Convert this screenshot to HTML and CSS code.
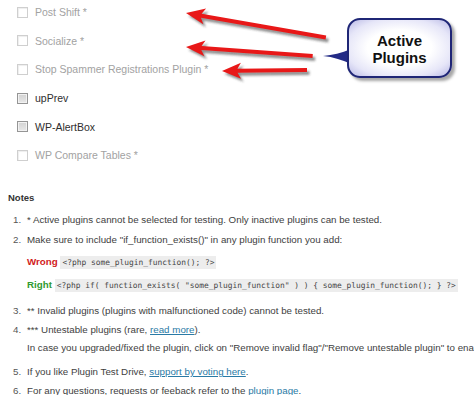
FILE: index.html
```html
<!DOCTYPE html>
<html>
<head>
<meta charset="utf-8">
<link rel="stylesheet" href="styles.css">
</head>
<body>
<div class="page">
  <div class="plugins">
    <div class="row off"><span class="cb"></span><span class="lbl">Post Shift *</span></div>
    <div class="row off"><span class="cb"></span><span class="lbl">Socialize *</span></div>
    <div class="row off"><span class="cb"></span><span class="lbl">Stop Spammer Registrations Plugin *</span></div>
    <div class="row on"><span class="cb"></span><span class="lbl">upPrev</span></div>
    <div class="row on"><span class="cb"></span><span class="lbl">WP-AlertBox</span></div>
    <div class="row off"><span class="cb"></span><span class="lbl">WP Compare Tables *</span></div>
  </div>

  <h3 class="notes-title">Notes</h3>
  <ol class="notes">
    <li><div class="txt">* Active plugins cannot be selected for testing. Only inactive plugins can be tested.</div></li>
    <li class="multi"><div class="txt">
      <p>Make sure to include "if_function_exists()" in any plugin function you add:</p>
      <p class="code-line"><b class="wrong">Wrong</b> <code>&lt;?php some_plugin_function(); ?&gt;</code></p>
      <p class="code-line"><b class="right">Right</b> <code>&lt;?php if( function_exists( "some_plugin_function" ) ) { some_plugin_function(); } ?&gt;</code></p>
    </div></li>
    <li><div class="txt">** Invalid plugins (plugins with malfunctioned code) cannot be tested.</div></li>
    <li class="multi"><div class="txt">
      <p>*** Untestable plugins (rare, <a href="#">read more</a>).</p>
      <p class="sub-line">In case you upgraded/fixed the plugin, click on "Remove invalid flag"/"Remove untestable plugin" to enable testing.</p>
    </div></li>
    <li><div class="txt">If you like Plugin Test Drive, <a href="#">support by voting here</a>.</div></li>
    <li><div class="txt">For any questions, requests or feeback refer to the <a href="#">plugin page</a>.</div></li>
  </ol>

  <svg class="overlay" width="474" height="395" viewBox="0 0 474 395">
    <defs>
      <filter id="blur" x="-20%" y="-80%" width="140%" height="260%">
        <feGaussianBlur stdDeviation="1.3"/>
      </filter>
      <path id="ar1" d="M0 0 L19 -8 L15.5 -2 L142 -2 L142 2 L15.5 2 L19 8 Z"/>
      <path id="ar2" d="M0 0 L19 -8 L15.5 -2 L127 -2 L127 2 L15.5 2 L19 8 Z"/>
      <path id="ar3" d="M0 0 L19 -8 L15.5 -2 L85 -2 L85 2 L15.5 2 L19 8 Z"/>
    </defs>
    <g class="shadow" transform="translate(2.5 3)" filter="url(#blur)">
      <use href="#ar1" transform="translate(186 13) rotate(9.9)"/>
      <use href="#ar2" transform="translate(186 47) rotate(4.1)"/>
      <use href="#ar3" transform="translate(222 71) rotate(-0.7)"/>
    </g>
    <g class="red">
      <use href="#ar1" transform="translate(186 13) rotate(9.9)"/>
      <use href="#ar2" transform="translate(186 47) rotate(4.1)"/>
      <use href="#ar3" transform="translate(222 71) rotate(-0.7)"/>
    </g>
    <path class="tail" d="M351 49 C341 53 333 55 323 56 C333 57 343 60 351 64 Z"/>
  </svg>

  <div class="callout">Active<br>Plugins</div>
</div>
</body>
</html>
```

FILE: styles.css
```css
html, body {
  margin: 0;
  padding: 0;
  background: #fff;
  overflow: hidden;
}
body {
  width: 474px;
  height: 395px;
  font-family: "Liberation Sans", Arial, sans-serif;
}
.page {
  position: relative;
  width: 474px;
  height: 395px;
  padding: 0 8px;
  box-sizing: border-box;
  overflow: hidden;
}
.plugins {
  display: flex;
  flex-direction: column;
  gap: 11.7px;
  padding: 3.5px 0 0 9px;
}
.row {
  display: flex;
  align-items: center;
  height: 17px;
  font-size: 10.5px;
}
.cb {
  width: 11px;
  height: 11px;
  box-sizing: border-box;
  margin-right: 7px;
  flex: none;
}
.row.off .cb {
  border: 1px solid #cfcfcf;
  background: #fff;
  box-shadow: inset 1px 1px 1px #eee;
}
.row.on .cb {
  border: 1px solid #959595;
  background: linear-gradient(#d2d2d2, #e8e8e8);
  box-shadow: inset 0 0 0 1px #f2f2f2;
}
.row.off .lbl { color: #a2a2a2; }
.row.on .lbl { color: #2e2e2e; }

.notes-title {
  margin: 27.5px 0 0;
  font-size: 9.5px;
  line-height: 13px;
  font-weight: bold;
  color: #333;
}
.notes {
  list-style: none;
  counter-reset: n;
  margin: 9px 0 0;
  padding: 0 0 0 5px;
  font-size: 9.75px;
  line-height: 13px;
  color: #3e3e3e;
}
.notes li {
  counter-increment: n;
  display: grid;
  grid-template-columns: 14px minmax(0, 1fr);
}
.notes li::before {
  content: counter(n) ".";
  color: #555;
}
.notes li + li { margin-top: 5.4px; }
.notes li:nth-child(2) { margin-top: 7px; }
.notes li.multi { padding-bottom: 5.6px; }
.txt { white-space: nowrap; }
.txt p { margin: 0; }
.code-line {
  margin-top: 8.5px !important;
  line-height: 14px;
}
.sub-line { margin-top: 5.4px !important; }
.wrong { color: #d11a1a; }
.right { color: #2f9a2f; }
code {
  font-family: "DejaVu Sans Mono", "Liberation Mono", monospace;
  font-size: 7.9px;
  background: #ededed;
  color: #444;
  padding: 2px 2px;
}
a {
  color: #2a7aa5;
  text-decoration: underline;
}

.overlay {
  position: absolute;
  left: 0;
  top: 0;
  pointer-events: none;
}
.shadow { fill: rgba(60, 60, 60, 0.55); }
.red { fill: #e81818; }
.tail { fill: #232b86; }

.callout {
  position: absolute;
  left: 347px;
  top: 18px;
  width: 105px;
  height: 60px;
  box-sizing: border-box;
  border: 2px solid #1f2676;
  border-radius: 13px;
  background: radial-gradient(ellipse at center, #ffffff 45%, #e6e6f8 75%, #b9b9e6 100%);
  box-shadow: 3px 3px 3px rgba(0, 0, 0, 0.35);
  display: flex;
  align-items: center;
  justify-content: center;
  text-align: center;
  font-size: 15px;
  line-height: 17px;
  font-weight: bold;
  color: #111;
  padding-top: 1px;
}
```
